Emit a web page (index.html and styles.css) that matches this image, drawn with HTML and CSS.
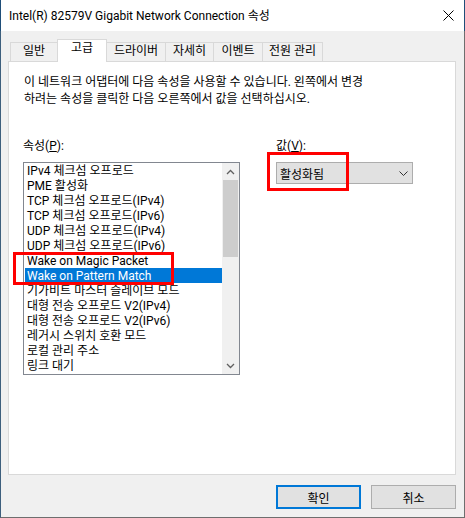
FILE: index.html
```html
<!DOCTYPE html>
<html lang="ko">
<head>
<meta charset="utf-8">
<title>Intel(R) 82579V Gigabit Network Connection 속성</title>
<link rel="stylesheet" href="styles.css">
</head>
<body>
<div class="window">
  <div class="titlebar">
    <span class="title">Intel(R) 82579V Gigabit Network Connection 속성</span>
    <svg class="close" width="11" height="11" viewBox="0 0 11 11"><path d="M0.5 0.5 L10.5 10.5 M10.5 0.5 L0.5 10.5" stroke="#000" stroke-width="1" fill="none"/></svg>
  </div>
  <div class="client">
    <div class="tabs">
      <div class="tab tab-general">일반</div>
      <div class="tab tab-advanced active">고급</div>
      <div class="tab tab-driver">드라이버</div>
      <div class="tab tab-details">자세히</div>
      <div class="tab tab-events">이벤트</div>
      <div class="tab tab-power">전원 관리</div>
    </div>
    <div class="panel">
      <p class="desc">이 네트워크 어댑터에 다음 속성을 사용할 수 있습니다. 왼쪽에서 변경<br>하려는 속성을 클릭한 다음 오른쪽에서 값을 선택하십시오.</p>
      <div class="fields">
        <div class="field">
          <div class="label">속성(<u>P</u>):</div>
          <div class="listbox">
            <ul class="items">
              <li>IPv4 체크섬 오프로드</li>
              <li>PME 활성화</li>
              <li>TCP 체크섬 오프로드(IPv4)</li>
              <li>TCP 체크섬 오프로드(IPv6)</li>
              <li>UDP 체크섬 오프로드(IPv4)</li>
              <li>UDP 체크섬 오프로드(IPv6)</li>
              <li>Wake on Magic Packet</li>
              <li class="selected">Wake on Pattern Match</li>
              <li>기가비트 마스터 슬레이브 모드</li>
              <li>대형 전송 오프로드 V2(IPv4)</li>
              <li>대형 전송 오프로드 V2(IPv6)</li>
              <li>레거시 스위치 호환 모드</li>
              <li>로컬 관리 주소</li>
              <li>링크 대기</li>
            </ul>
            <div class="scrollbar">
              <div class="sb-btn"><svg width="9" height="6" viewBox="0 0 9 6"><path d="M1 5 L4.5 1.5 L8 5" stroke="#606060" stroke-width="1.3" fill="none"/></svg></div>
              <div class="sb-thumb"></div>
              <div class="sb-track"></div>
              <div class="sb-btn"><svg width="9" height="6" viewBox="0 0 9 6"><path d="M1 1 L4.5 4.5 L8 1" stroke="#606060" stroke-width="1.3" fill="none"/></svg></div>
            </div>
          </div>
        </div>
        <div class="field">
          <div class="label">값(<u>V</u>):</div>
          <div class="combo">
            <span>활성화됨</span>
            <svg class="chev" width="9" height="5" viewBox="0 0 9 5"><path d="M0.5 0.5 L4.5 4.5 L8.5 0.5" stroke="#333" stroke-width="1" fill="none"/></svg>
          </div>
        </div>
      </div>
    </div>
    <div class="buttons">
      <button class="btn default">확인</button>
      <button class="btn">취소</button>
    </div>
  </div>
  <div class="mark mark-list"></div>
  <div class="mark mark-value"></div>
</div>
</body>
</html>
```

FILE: styles.css
```css
* { box-sizing: border-box; }
html, body { margin: 0; padding: 0; }
body {
  width: 465px;
  height: 518px;
  overflow: hidden;
  font-family: Roboto, "Noto Sans CJK KR", sans-serif;
  font-size: 12px;
  color: #000;
  background: #fff;
}
.window {
  position: relative;
  width: 465px;
  height: 518px;
  display: flex;
  flex-direction: column;
}
.titlebar {
  height: 31px;
  flex: none;
  display: flex;
  align-items: center;
  padding-left: 8px;
  background: #fff;
  border-left: 1px solid #1f4e79;
  border-right: 1px solid #1f4e79;
}
.title { line-height: 16px; padding-top: 1px; }
.close { margin-left: auto; margin-right: 10px; }
.client {
  flex: 1;
  display: flex;
  flex-direction: column;
  background: #f0f0f0;
  border: 1px solid #6e6e6e;
  border-left-color: #3d5f7d;
  border-top: none;
  padding: 8px 8px 0 7px;
}
.tabs {
  display: flex;
  align-items: flex-end;
  height: 22px;
  margin-left: 2px;
}
.tab {
  height: 19px;
  line-height: 17px;
  text-align: center;
  background: #f0f0f0;
  border: 1px solid #d9d9d9;
  border-bottom: none;
  border-right: none;
  white-space: nowrap;
}
.tab:last-child { border-right: 1px solid #d9d9d9; }
.tab.active {
  height: 23px;
  margin-bottom: -1px;
  background: #fff;
  border-right: 1px solid #d9d9d9;
  position: relative;
  z-index: 1;
}
.tab.active + .tab { border-left: none; }
.tab-general { width: 47px; }
.tab-advanced { width: 50px; }
.tab-driver { width: 58px; }
.tab-details { width: 48px; }
.tab-events { width: 49px; }
.tab-power { width: 61px; }
.panel {
  height: 414px;
  flex: none;
  background: #fff;
  border: 1px solid #d9d9d9;
  padding: 12px 0 0 14px;
}
.desc {
  margin: 0 0 0 1px;
  line-height: 17px;
}
.fields {
  display: grid;
  grid-template-columns: 217px 137px;
  column-gap: 36px;
  margin-top: 30px;
}
.label {
  line-height: 16px;
  margin-bottom: 8px;
}
.listbox {
  width: 217px;
  height: 213px;
  border: 1px solid #828790;
  background: #fff;
  display: flex;
}
.items {
  flex: 1;
  list-style: none;
  margin: 0;
  padding: 0 0 0 1px;
  overflow: hidden;
}
.items li {
  height: 15px;
  line-height: 14px;
  padding: 1px 0 0 2px;
  white-space: nowrap;
}
.items li.selected {
  background: #0078d7;
  color: #fff;
}
.scrollbar {
  width: 17px;
  flex: none;
  background: #f0f0f0;
  display: flex;
  flex-direction: column;
}
.sb-btn {
  height: 17px;
  flex: none;
  display: flex;
  align-items: center;
  justify-content: center;
}
.sb-thumb {
  height: 77px;
  flex: none;
  margin: 0 1px;
  background: #cdcdcd;
}
.sb-track { flex: 1; }
.combo {
  height: 22px;
  border: 1px solid #adadad;
  background: #e1e1e1;
  display: flex;
  align-items: center;
  padding: 0 3px 0 3px;
}
.chev { margin-left: auto; margin-right: 1px; }
.buttons {
  display: flex;
  justify-content: flex-end;
  gap: 10px;
  margin-top: 10px;
}
.btn {
  width: 85px;
  height: 24px;
  padding: 0;
  border: 1px solid #adadad;
  background: #e1e1e1;
  font: inherit;
  color: #000;
}
.btn.default { border: 2px solid #0078d7; }
.mark {
  position: absolute;
  border: 3px solid #f00;
  pointer-events: none;
}
.mark-list { left: 13px; top: 252px; width: 161px; height: 33px; }
.mark-value { left: 267px; top: 152px; width: 82px; height: 39px; }
```
